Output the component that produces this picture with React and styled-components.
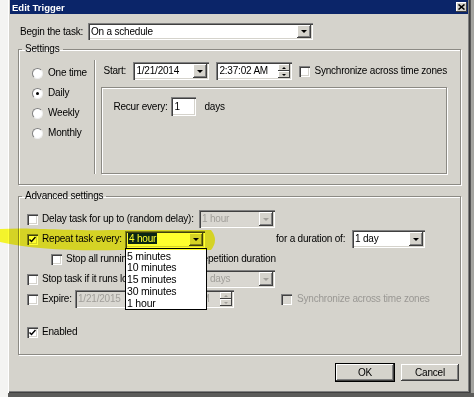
import React from 'react';
import styled, { createGlobalStyle } from 'styled-components';

const GlobalStyle = createGlobalStyle`
  body {
    margin: 0;
    font-family: "Liberation Sans", Arial, sans-serif;
    font-size: 10px;
    letter-spacing: -0.2px;
    color: #000;
    background: #f4f4f2;
  }
`;

const Screen = styled.div`
  position: relative;
  width: 474px;
  height: 397px;
  overflow: hidden;
  background: #f4f4f2;
`;

const Desk = styled.div`
  display: flex;
  padding-left: 8px;
`;

const RightEdge = styled.div`
  width: 4px;
  background: #a4a4a0;
  border-left: 1px solid #555;
`;

const BottomStrip = styled.div`
  height: 4px;
  margin-left: 8px;
  background: #5c5c5a;
`;

const Window = styled.div`
  width: 462px;
  height: 393px;
  box-sizing: border-box;
  padding: 0 2px;
  background: #d5d3cc;
  box-shadow: inset 1px 0 #fff, inset -1px -1px #404040, inset -2px -2px #808080;
  display: flex;
  flex-direction: column;
`;

const TitleBar = styled.div`
  height: 14px;
  background: #0b2569;
  display: flex;
  align-items: center;
  justify-content: space-between;
  padding: 0 1px 0 2px;
`;

const Title = styled.span`
  color: #fff;
  font-weight: bold;
  font-size: 9.5px;
  letter-spacing: 0;
`;

const CloseBtn = styled.div`
  width: 11px;
  height: 10px;
  background: #d5d3cc;
  box-shadow: inset -1px -1px #404040, inset 1px 1px #fff;
  display: flex;
  align-items: center;
  justify-content: center;
`;

const Body = styled.div`
  flex: 1;
  display: flex;
  flex-direction: column;
  padding: 0 7px 0 8px;
`;

const Line = styled.div`
  display: flex;
  align-items: center;
  height: ${(p) => p.$h || 20}px;
  margin-top: ${(p) => p.$top || 0}px;
  padding-left: ${(p) => p.$indent || 0}px;
`;

const Label = styled.span`
  display: inline-block;
  flex: none;
  width: ${(p) => (p.$w ? `${p.$w}px` : 'auto')};
  margin-left: ${(p) => p.$ml || 0}px;
  color: ${(p) => (p.$disabled ? '#9a9894' : '#000')};
  line-height: 12px;
  white-space: nowrap;
`;

const Group = styled.fieldset`
  margin: ${(p) => p.$top}px 0 0;
  padding: 0;
  min-width: 0;
  border: 1px solid #8c8a84;
  box-shadow: 1px 1px 0 #fff, inset 1px 1px 0 #fff;
`;

const Legend = styled.legend`
  margin-left: 3px;
  padding: 0 3px;
  line-height: 12px;
`;

const SettingsInner = styled.div`
  display: flex;
  padding: 5px 0 10px;
`;

const RadioCol = styled.div`
  width: 79px;
  padding: 3px 0 0 13px;
  box-sizing: border-box;
`;

const RadioRow = styled.div`
  display: flex;
  align-items: center;
  height: 20px;
  gap: 5px;
`;

const Radio = styled.span`
  width: 9px;
  height: 9px;
  border-radius: 50%;
  background: #fff;
  border: 1px solid;
  border-color: #808080 #eee #eee #808080;
  display: flex;
  align-items: center;
  justify-content: center;
  &::after {
    content: '';
    width: 3px;
    height: 3px;
    border-radius: 50%;
    background: ${(p) => (p.$on ? '#000' : 'transparent')};
  }
`;

const VSep = styled.div`
  width: 0;
  border-left: 1px solid #8c8a84;
  border-right: 1px solid #fff;
`;

const RightArea = styled.div`
  flex: 1;
  padding: 2px 13px 0 5px;
`;

const RecurBox = styled.div`
  margin-top: 7px;
  height: 87px;
  box-sizing: border-box;
  border: 1px solid #8c8a84;
  box-shadow: 1px 1px 0 #fff, inset 1px 1px 0 #fff;
  padding: 9px 0 0 11px;
`;

const sunken = `
  box-shadow: inset 1px 1px #808080, inset 2px 2px #404040, inset -1px -1px #fff, inset -2px -2px #d5d3cc;
`;

const Field = styled.div`
  position: relative;
  flex: none;
  display: flex;
  align-items: center;
  box-sizing: border-box;
  width: ${(p) => p.$w}px;
  height: ${(p) => p.$h || 18}px;
  margin-left: ${(p) => p.$ml || 0}px;
  background: ${(p) => (p.$disabled ? '#d9d7d1' : '#fff')};
  color: ${(p) => (p.$disabled ? '#a19f9a' : '#000')};
  ${sunken}
  padding: 2px;
`;

const Value = styled.span`
  flex: 1;
  padding-left: 1px;
  line-height: 12px;
  white-space: nowrap;
  overflow: hidden;
`;

const Selected = styled.span`
  background: #0b2569;
  color: #fff;
  padding: 0 1px;
`;

const DropBtn = styled.div`
  width: 14px;
  height: 100%;
  flex: none;
  background: #d5d3cc;
  box-shadow: inset -1px -1px #404040, inset 1px 1px #fff, inset -2px -2px #808080;
  display: flex;
  align-items: center;
  justify-content: center;
  &::after {
    content: '';
    border-left: 3px solid transparent;
    border-right: 3px solid transparent;
    border-top: 3px solid ${(p) => (p.$disabled ? '#a19f9a' : '#000')};
  }
`;

const Spin = styled.div`
  width: 12px;
  height: 100%;
  flex: none;
  display: flex;
  flex-direction: column;
`;

const SpinBtn = styled.div`
  flex: 1;
  background: #d5d3cc;
  box-shadow: inset -1px -1px #404040, inset 1px 1px #fff;
  display: flex;
  align-items: center;
  justify-content: center;
  &::after {
    content: '';
    border-left: 2px solid transparent;
    border-right: 2px solid transparent;
    ${(p) => (p.$up ? 'border-bottom' : 'border-top')}: 2px solid ${(p) => (p.$disabled ? '#a19f9a' : '#000')};
  }
`;

const Box = styled.span`
  width: 11px;
  height: 11px;
  flex: none;
  box-sizing: border-box;
  margin-left: ${(p) => p.$ml || 0}px;
  background: ${(p) => (p.$disabled ? '#d9d7d1' : '#fff')};
  ${sunken}
  display: flex;
  align-items: center;
  justify-content: center;
`;

const AdvInner = styled.div`
  padding: 7px 0 12px 8px;
`;

const DropList = styled.div`
  position: absolute;
  left: 0;
  top: 100%;
  width: 82px;
  box-sizing: border-box;
  background: #fff;
  border: 1px solid #000;
  padding: 1px 0;
  z-index: 2;
`;

const DropItem = styled.div`
  height: 11.8px;
  line-height: 12px;
  padding-left: 1px;
  font-size: 10.5px;
`;

const Buttons = styled.div`
  display: flex;
  justify-content: flex-end;
  gap: 5px;
  margin-top: 8px;
  padding-right: 1px;
`;

const Button = styled.div`
  width: 60px;
  height: 19px;
  box-sizing: border-box;
  display: flex;
  align-items: center;
  justify-content: center;
  background: #d5d3cc;
  border: 1px solid ${(p) => (p.$default ? '#000' : 'transparent')};
  box-shadow: inset -1px -1px #404040, inset 1px 1px #fff, inset -2px -2px #808080;
`;

const Marker = styled.svg`
  position: absolute;
  left: 0;
  top: 225px;
  pointer-events: none;
  mix-blend-mode: multiply;
  z-index: 3;
`;

function Check({ on, disabled, ml }) {
  return (
    <Box $disabled={disabled} $ml={ml}>
      {on && (
        <svg width="7" height="7" viewBox="0 0 7 7">
          <path d="M0.5 3.5 L2.5 5.5 L6.5 1" fill="none" stroke="#000" strokeWidth="1.5" />
        </svg>
      )}
    </Box>
  );
}

function Combo({ w, h, ml, value, disabled, children }) {
  return (
    <Field $w={w} $h={h} $ml={ml} $disabled={disabled}>
      <Value>{value}</Value>
      <DropBtn $disabled={disabled} />
      {children}
    </Field>
  );
}

function TimeBox({ w, ml, value, disabled }) {
  return (
    <Field $w={w} $ml={ml} $disabled={disabled}>
      <Value>{value}</Value>
      <Spin>
        <SpinBtn $up $disabled={disabled} />
        <SpinBtn $disabled={disabled} />
      </Spin>
    </Field>
  );
}

const intervals = ['5 minutes', '10 minutes', '15 minutes', '30 minutes', '1 hour'];

export default function App() {
  return (
    <Screen>
      <GlobalStyle />
      <Desk>
        <Window>
          <TitleBar>
            <Title>Edit Trigger</Title>
            <CloseBtn>
              <svg width="7" height="6" viewBox="0 0 7 6">
                <path d="M0.5 0.5 L6.5 5.5 M6.5 0.5 L0.5 5.5" stroke="#000" strokeWidth="1.6" />
              </svg>
            </CloseBtn>
          </TitleBar>
          <Body>
            <Line $h={17} $top={9} $indent={2}>
              <Label $w={68}>Begin the task:</Label>
              <Combo w={225} h={17} value="On a schedule" />
            </Line>

            <Group $top={3}>
              <Legend>Settings</Legend>
              <SettingsInner>
                <RadioCol>
                  <RadioRow><Radio /><Label>One time</Label></RadioRow>
                  <RadioRow><Radio $on /><Label>Daily</Label></RadioRow>
                  <RadioRow><Radio /><Label>Weekly</Label></RadioRow>
                  <RadioRow><Radio /><Label>Monthly</Label></RadioRow>
                </RadioCol>
                <VSep />
                <RightArea>
                  <Line $h={18} $indent={2}>
                    <Label $w={30}>Start:</Label>
                    <Combo w={76} value="1/21/2014" />
                    <TimeBox w={76} ml={7} value="2:37:02 AM" />
                    <Check ml={7} />
                    <Label $ml={4}>Synchronize across time zones</Label>
                  </Line>
                  <RecurBox>
                    <Line $h={19}>
                      <Label $w={58}>Recur every:</Label>
                      <Field $w={25} $h={19}>
                        <Value>1</Value>
                      </Field>
                      <Label $ml={8}>days</Label>
                    </Line>
                  </RecurBox>
                </RightArea>
              </SettingsInner>
            </Group>

            <Group $top={5}>
              <Legend>Advanced settings</Legend>
              <AdvInner>
                <Line>
                  <Check />
                  <Label $ml={4} $w={157}>Delay task for up to (random delay):</Label>
                  <Combo w={76} value="1 hour" disabled />
                </Line>
                <Line>
                  <Check on />
                  <Label $ml={4} $w={83}>Repeat task every:</Label>
                  <Combo w={80} h={17} value={<Selected>4 hour</Selected>}>
                    <DropList>
                      {intervals.map((t) => (
                        <DropItem key={t}>{t}</DropItem>
                      ))}
                    </DropList>
                  </Combo>
                  <Label $ml={71} $w={76}>for a duration of:</Label>
                  <Combo w={73} value="1 day" />
                </Line>
                <Line $indent={24}>
                  <Check />
                  <Label $ml={4}>Stop all running tasks at end of repetition duration</Label>
                </Line>
                <Line>
                  <Check />
                  <Label $ml={4} $w={157}>Stop task if it runs longer than:</Label>
                  <Combo w={76} value="3 days" disabled />
                </Line>
                <Line>
                  <Check />
                  <Label $ml={4} $w={33}>Expire:</Label>
                  <Combo w={82} value="1/21/2015" disabled />
                  <TimeBox w={76} ml={1} value="2:37:02 AM" disabled />
                  <Check ml={47} disabled />
                  <Label $ml={5} $disabled>Synchronize across time zones</Label>
                </Line>
                <Line $top={13}>
                  <Check on />
                  <Label $ml={4}>Enabled</Label>
                </Line>
              </AdvInner>
            </Group>

            <Buttons>
              <Button $default>OK</Button>
              <Button>Cancel</Button>
            </Buttons>
          </Body>
        </Window>
        <RightEdge />
      </Desk>
      <BottomStrip />
      <Marker width="222" height="32" viewBox="0 0 222 32">
        <path
          d="M0,4 C30,2 60,6 120,5 L211,5 Q219,15 211,25 L120,25 C70,26 30,24 0,17 Z"
          fill="#ffff2e"
        />
      </Marker>
    </Screen>
  );
}
